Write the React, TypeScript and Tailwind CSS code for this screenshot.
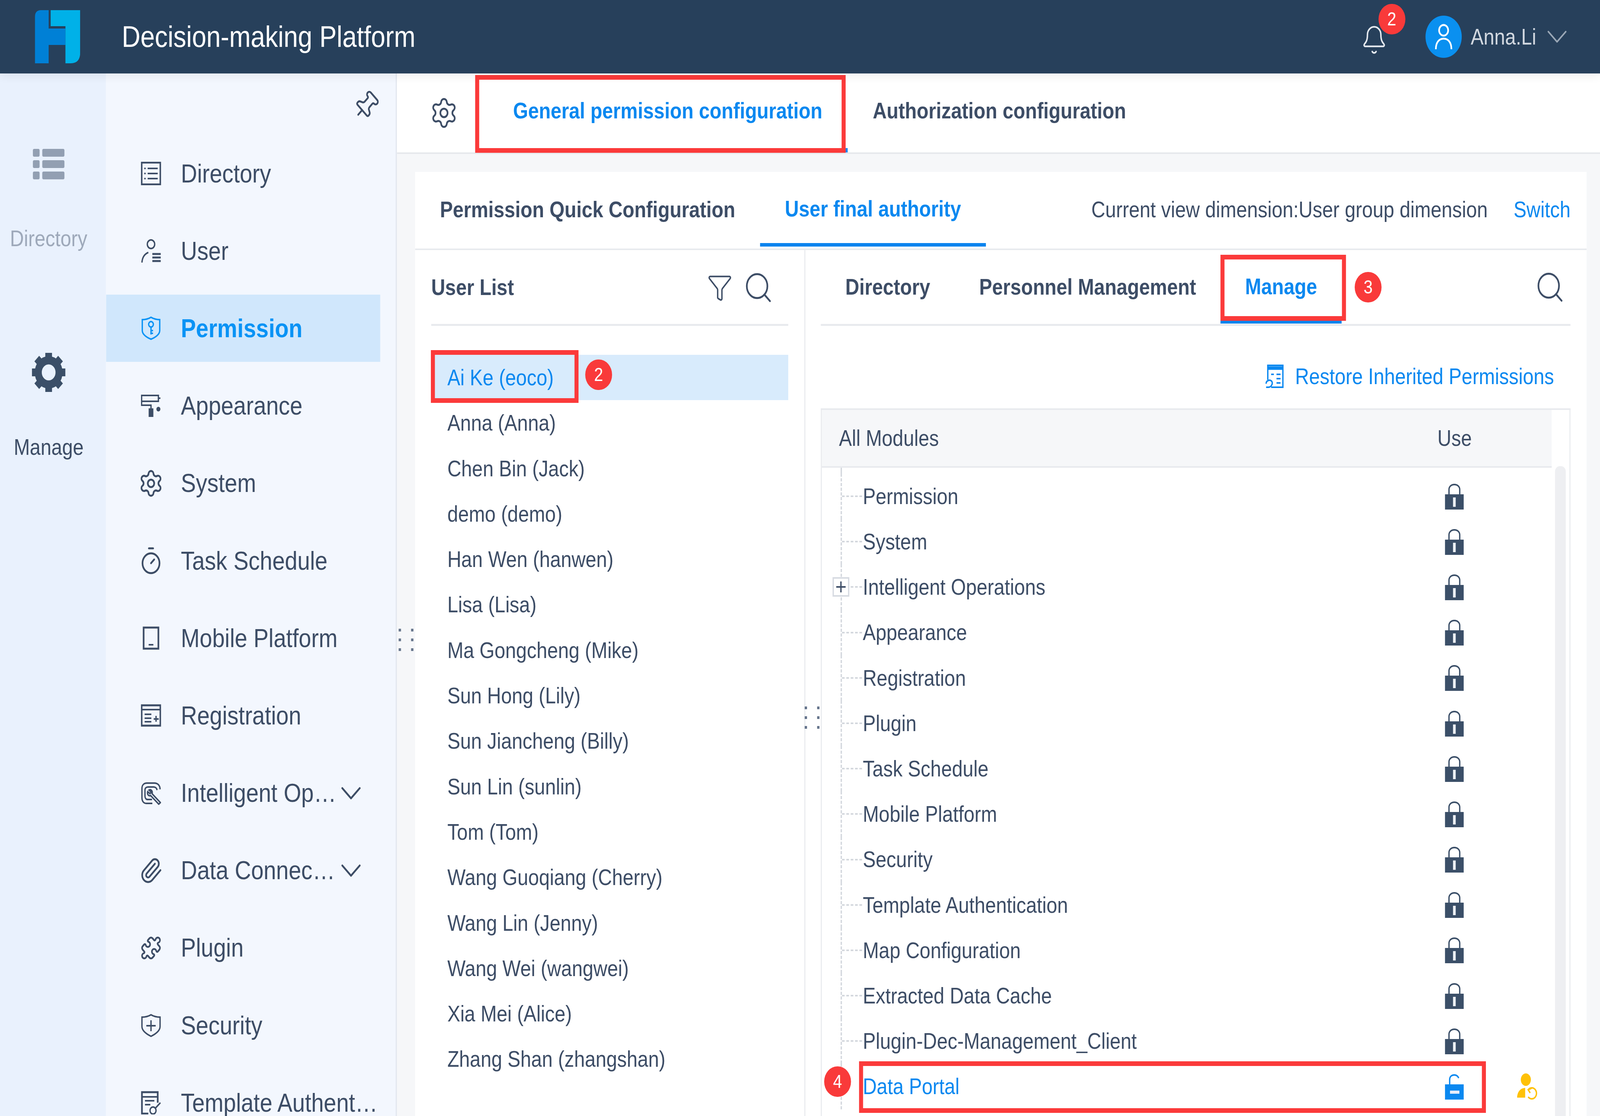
import { Bell, ChevronDown, Funnel, Paperclip, Pin, Puzzle, Search, Settings, Timer } from "lucide-react";
import type { ReactNode } from "react";

function Logo() {
  return (
    <svg viewBox="0 0 135 136" className="w-[135px] h-[136px]">
      <path d="M18 0H41V47H91V89H41V136H0V18Q0 0 18 0Z" fill="#0080d6" />
      <path d="M47 0H135V108Q135 136 107 136H91V41H47Z" fill="#00b1e8" />
    </svg>
  );
}

function Line({ children }: { children: ReactNode }) {
  return (
    <svg viewBox="0 0 60 60" fill="none" stroke="currentColor" strokeWidth="4" className="w-[60px] h-[60px] shrink-0">
      {children}
    </svg>
  );
}

const DirectoryIcon = () => (
  <Line>
    <rect x="2" y="2" width="56" height="56" strokeWidth="5" />
    <path d="M10 17h4M20 17h30M10 30h4M20 30h30M10 43h4M20 43h30" />
  </Line>
);
const UserIcon = () => (
  <Line>
    <circle cx="30" cy="13" r="11" />
    <path d="M3 60C4 46 11 38 22 34" />
    <path d="M34 38h25M34 47h25M34 56h25" strokeWidth="5" />
  </Line>
);
const KeyShieldIcon = () => (
  <Line>
    <path d="M30 2C38 6 48 8 56 8V36C56 46 42 54 30 58C18 54 4 46 4 36V8C12 8 22 6 30 2Z" />
    <circle cx="30" cy="20" r="7" />
    <path d="M30 27V46M30 36h6M30 43h6" />
  </Line>
);
const RollerIcon = () => (
  <Line>
    <rect x="2" y="3" width="50" height="15" />
    <path d="M52 10h6M2 18v10H30v8" />
    <rect x="23" y="36" width="14" height="22" fill="currentColor" stroke="none" />
    <circle cx="52" cy="38" r="6" fill="currentColor" stroke="none" />
  </Line>
);
const MobileIcon = () => (
  <Line>
    <rect x="8" y="3" width="44" height="54" strokeWidth="5" />
    <path d="M23 47h14" />
  </Line>
);
const RegistrationIcon = () => (
  <Line>
    <rect x="2" y="4" width="56" height="52" strokeWidth="5" />
    <path d="M2 15h56M11 27h20M11 37h20M11 46h20M38 39h15M45 31v15" />
  </Line>
);
const IntelligentIcon = () => (
  <Line>
    <path d="M34 56H16C8 56 3 50 3 42V18C3 9 9 4 18 4H40C50 4 57 10 57 20" />
    <path d="M33 46H20C15 46 12 42 12 37V22C12 17 16 14 21 14H38C43 14 47 17 48 22" />
    <path d="M24 22C29 19 36 24 33 31L58 54L53 58L29 36C23 38 18 33 20 26L27 31L31 27Z" />
  </Line>
);
const SecurityIcon = () => (
  <Line>
    <path d="M30 3C38 7 48 9 57 9V33C57 44 44 52 30 58C16 52 3 44 3 33V9C12 9 22 7 30 3Z" />
    <path d="M30 17V45M16 31H44" />
  </Line>
);
const TemplateIcon = () => (
  <Line>
    <path d="M50 30V3H3V58H22" strokeWidth="5" />
    <path d="M3 15H50M12 25H40M12 35H28" />
    <circle cx="36" cy="50" r="9" />
    <path d="M43 44L58 30" />
  </Line>
);

const SideItems: { label: string; icon: ReactNode; more?: boolean; active?: boolean }[] = [
  { label: "Directory", icon: <DirectoryIcon /> },
  { label: "User", icon: <UserIcon /> },
  { label: "Permission", icon: <KeyShieldIcon />, active: true },
  { label: "Appearance", icon: <RollerIcon /> },
  { label: "System", icon: <Settings className="w-[76px] h-[76px] shrink-0" strokeWidth={1.6} /> },
  { label: "Task Schedule", icon: <Timer className="w-[76px] h-[76px] shrink-0" strokeWidth={1.6} /> },
  { label: "Mobile Platform", icon: <MobileIcon /> },
  { label: "Registration", icon: <RegistrationIcon /> },
  { label: "Intelligent Operations", icon: <IntelligentIcon />, more: true },
  { label: "Data Connection", icon: <Paperclip className="w-[70px] h-[70px] shrink-0" strokeWidth={1.7} />, more: true },
  { label: "Plugin", icon: <Puzzle className="w-[64px] h-[64px] shrink-0" strokeWidth={1.8} /> },
  { label: "Security", icon: <SecurityIcon /> },
  { label: "Template Authentication", icon: <TemplateIcon /> },
];

const users = [
  "Ai Ke (eoco)",
  "Anna (Anna)",
  "Chen Bin (Jack)",
  "demo (demo)",
  "Han Wen (hanwen)",
  "Lisa (Lisa)",
  "Ma Gongcheng (Mike)",
  "Sun Hong (Lily)",
  "Sun Jiancheng (Billy)",
  "Sun Lin (sunlin)",
  "Tom (Tom)",
  "Wang Guoqiang (Cherry)",
  "Wang Lin (Jenny)",
  "Wang Wei (wangwei)",
  "Xia Mei (Alice)",
  "Zhang Shan (zhangshan)",
];

const modules = [
  "Permission",
  "System",
  "Intelligent Operations",
  "Appearance",
  "Registration",
  "Plugin",
  "Task Schedule",
  "Mobile Platform",
  "Security",
  "Template Authentication",
  "Map Configuration",
  "Extracted Data Cache",
  "Plugin-Dec-Management_Client",
];

function Lock({ open }: { open?: boolean }) {
  if (open) {
    return (
      <svg viewBox="0 0 56 67" className="w-[56px] h-[67px] text-[#0a88f0]">
        <path d="M14 30V16C14 8 20 4 28 4C34 4 38 6 41 12" fill="none" stroke="currentColor" strokeWidth="4" />
        <rect y="28" width="56" height="39" fill="currentColor" />
        <rect x="15" y="44" width="28" height="8" fill="#e4edfb" />
      </svg>
    );
  }
  return (
    <svg viewBox="0 0 56 67" className="w-[56px] h-[67px] text-[#3b4f68]">
      <path d="M12 30V16C12 8 19 3 28 3C37 3 44 8 44 16V30" fill="none" stroke="currentColor" strokeWidth="4" />
      <rect y="28" width="56" height="39" fill="currentColor" />
      <rect x="24" y="36" width="8" height="24" fill="#eef2f7" />
    </svg>
  );
}

function Dots({ className }: { className: string }) {
  return (
    <div className={"grid grid-cols-2 gap-x-[30px] gap-y-[18px] " + className}>
      {[0, 1, 2, 3, 4, 5].map((i) => (
        <span key={i} className="w-[7px] h-[7px] bg-[#66758c]" />
      ))}
    </div>
  );
}

function Badge({ n, className }: { n: number; className: string }) {
  return (
    <div className={"absolute w-[80px] h-[78px] rounded-full bg-[#f93a3a] text-white text-[48px] flex items-center justify-center " + className}>
      {n}
    </div>
  );
}

function RedBox({ className }: { className: string }) {
  return <div className={"absolute border-[12px] border-[#fb3a3a] " + className} />;
}

export default function App() {
  // the layout is 4768 wide; squeeze it if the window turns out narrower
  const fit = Math.min(1, window.innerWidth / 4768);

  return (
    <div className="w-full h-[2856px] overflow-hidden">
      <div
        className="relative w-[4768px] h-[2856px] overflow-hidden origin-top-left flex flex-col bg-white text-[#3d4d66] font-['Liberation_Sans',Arial,sans-serif] text-[57.6px]"
        style={{ transform: `scaleX(${fit})` }}
      >
        <header className="relative z-10 h-[188px] shrink-0 flex items-center bg-[#27405b] shadow-[0_8px_24px_rgba(0,0,0,0.06)]">
          <div className="ml-[104px]">
            <Logo />
          </div>
          <div className="ml-[124px] text-[76.8px] text-white">Decision-making Platform</div>
          <div className="ml-auto flex items-center pr-[76px]">
            <div className="relative text-[#e6eaf0]">
              <Bell className="w-[80px] h-[80px] mt-[16px]" strokeWidth={1.3} />
              <Badge n={2} className="left-[53px] top-[-36px]" />
            </div>
            <div className="ml-[113px] w-[108px] h-[108px] rounded-full bg-[#0a90f0] flex items-center justify-center">
              <svg viewBox="0 0 60 70" fill="none" stroke="white" strokeWidth="5" className="w-[58px] h-[68px]">
                <circle cx="30" cy="18" r="14" />
                <path d="M6 68C6 50 16 40 30 40C44 40 54 50 54 68" />
              </svg>
            </div>
            <span className="ml-[27px] text-[#d2d8e0]">Anna.Li</span>
            <ChevronDown className="ml-[10px] w-[104px] h-[104px] text-[#9aa7b6]" strokeWidth={1} />
          </div>
        </header>

        <div className="flex-1 flex min-h-0">
          <aside className="w-[316px] shrink-0 bg-[#e9f1fd] flex flex-col items-center pr-[26px]">
            <div className="mt-[193px] w-[94px] h-[78px] grid grid-cols-[20px_1fr] grid-rows-3 gap-x-[8px] gap-y-[9px]">
              {[0, 1, 2, 3, 4, 5].map((i) => (
                <span key={i} className="rounded-[4px] bg-[#929fb2]" />
              ))}
            </div>
            <div className="mt-[116px] leading-[70px] text-[#9ea9ba]">Directory</div>
            <svg viewBox="0 0 100 100" className="mt-[258px] w-[100px] h-[100px] text-[#3b4f68]">
              {[0, 45, 90, 135, 180, 225, 270, 315].map((r) => (
                <rect key={r} x="40" y="0" width="20" height="22" fill="currentColor" transform={`rotate(${r} 50 50)`} />
              ))}
              <circle cx="50" cy="50" r="31" fill="none" stroke="currentColor" strokeWidth="21" />
            </svg>
            <div className="mt-[106px] leading-[70px]">Manage</div>
          </aside>

          <nav className="w-[867px] shrink-0 bg-[#f3f7fe] border-r-[4px] border-[#e3e8f0] overflow-hidden">
            <div className="h-[170px] flex justify-end pr-[48px] pt-[42px]">
              <Pin className="w-[80px] h-[80px] rotate-45" strokeWidth={1.5} />
            </div>
            <div className="flex flex-col gap-[26.2px] mr-[46px]">
              {SideItems.map((item) => (
                <div
                  key={item.label}
                  className={
                    "h-[172px] shrink-0 flex items-center pl-[104px] text-[67.2px] " +
                    (item.active ? "bg-[#d0e7fc] text-[#0a93f5] font-bold" : "")
                  }
                >
                  <div className="w-[60px] flex justify-center shrink-0">{item.icon}</div>
                  <span className={"ml-[59px] truncate " + (item.more ? "w-[470px]" : "w-[606px]")}>{item.label}</span>
                  {item.more && <ChevronDown className="ml-[-15px] w-[104px] h-[104px] shrink-0" strokeWidth={1.2} />}
                </div>
              ))}
            </div>
          </nav>

          <main className="flex-1 min-w-0 flex flex-col bg-[#f6f7f9]">
            <div className="h-[206px] shrink-0 bg-white border-b-[4px] border-[#e6e8ec] flex items-center pl-[97px] font-bold">
              <Settings className="w-[86px] h-[86px] shrink-0" strokeWidth={1.4} />
              <div className="ml-[88px] h-full flex">
                <div className="h-full px-[75px] flex items-center text-[#0a88f0] border-b-[11px] border-[#0a84ee]">General permission configuration</div>
                <div className="h-full px-[75px] flex items-center pb-[11px]">Authorization configuration</div>
              </div>
            </div>

            <div className="flex-1 min-h-0 flex pt-[46px] pl-[54px] pr-[40px]">
              <div className="flex-1 min-w-0 bg-white flex flex-col">
                <div className="h-[200px] shrink-0 flex border-b-[4px] border-[#e8eaee]">
                  <div className="h-full px-[74px] flex items-center font-bold pb-[4px]">Permission Quick Configuration</div>
                  <div className="h-[191px] px-[74px] flex items-center font-bold pt-[6px] text-[#0a88f0] border-b-[9px] border-[#0a84ee]">User final authority</div>
                  <div className="ml-auto flex items-center pr-[48px] pb-[4px]">
                    <span>Current view dimension:User group dimension</span>
                    <span className="ml-[77px] text-[#0a88f0]">Switch</span>
                  </div>
                </div>

                <div className="flex-1 min-h-0 flex">
                  <section className="w-[1163px] shrink-0 border-r-[3px] border-[#e8eaee] px-[48px]">
                    <div className="h-[194px] flex items-center border-b-[5px] border-[#e8eaee] pt-[2px]">
                      <span className="font-bold">User List</span>
                      <Funnel className="ml-auto w-[76px] h-[76px]" strokeWidth={1.3} />
                      <Search className="ml-[31px] mr-[43px] w-[92px] h-[92px]" strokeWidth={1.3} />
                    </div>
                    <div className="pt-[74px]">
                      {users.map((u, i) => (
                        <div key={u} className={"h-[116.3px] flex items-center pl-[48px] " + (i === 0 ? "bg-[#d8ebfc] text-[#0a88f0]" : "")}>
                          {u}
                        </div>
                      ))}
                    </div>
                  </section>

                  <section className="flex-1 min-w-0 pl-[46px] pr-[48px] flex flex-col">
                    <div className="h-[194px] shrink-0 flex border-b-[5px] border-[#e8eaee] font-bold">
                      <div className="h-full px-[73px] flex items-center">Directory</div>
                      <div className="h-full px-[73px] flex items-center">Personnel Management</div>
                      <div className="h-[188px] px-[73px] pt-[6px] flex items-center text-[#0a88f0] border-b-[7px] border-[#0a84ee]">Manage</div>
                      <Search className="ml-auto mr-[15px] self-center w-[92px] h-[92px]" strokeWidth={1.3} />
                    </div>
                    <div className="h-[211px] shrink-0 flex justify-end pt-[98px] pr-[49px] text-[#0a88f0]">
                      <svg viewBox="0 0 56 62" fill="none" stroke="currentColor" strokeWidth="4" className="w-[56px] h-[62px]">
                        <path d="M8 40V3H53V59H18" />
                        <path d="M8 10H53" strokeWidth="9" />
                        <path d="M18 26H26M34 26H46M34 37H46M34 48H46" />
                        <path d="M3 50C3 42 14 38 20 44C24 50 18 59 10 59H3" />
                      </svg>
                      <span className="ml-[34px] leading-[62px]">Restore Inherited Permissions</span>
                    </div>
                    <div className="flex-1 min-h-0 border-x-[3px] border-t-[4px] border-[#e8eaee] flex flex-col">
                      <div className="h-[148px] shrink-0 w-[2175px] bg-[#f6f7f9] border-b-[4px] border-[#e8eaee] flex items-center justify-between pl-[51px] pr-[238px]">
                        <span>All Modules</span>
                        <span>Use</span>
                      </div>
                      <div className="flex-1 min-h-0 flex">
                        <div className="w-[2175px] shrink-0 pl-[56px]">
                          <div className="h-[15px] border-l-[4px] border-dashed border-[#d3d7dd]" />
                          {modules.map((m) => (
                            <div key={m} className="h-[116.2px] flex items-center border-l-[4px] border-dashed border-[#d3d7dd]">
                              <div className="relative w-[60px] shrink-0 border-t-[4px] border-dashed border-[#d3d7dd] mr-[2px]">
                                {m === "Intelligent Operations" && (
                                  <div className="absolute left-[-28px] top-[-27px] w-[50px] h-[50px] bg-white border-[4px] border-[#d7dbe2] flex items-center justify-center">
                                    <span className="absolute w-[28px] h-[4px] bg-[#3d4d66]" />
                                    <span className="absolute w-[4px] h-[28px] bg-[#3d4d66]" />
                                  </div>
                                )}
                              </div>
                              <span className="flex-1 min-w-0">{m}</span>
                              <div className="mr-[262px]">
                                <Lock />
                              </div>
                            </div>
                          ))}
                          <div className="h-[116.2px] flex items-center border-l-[4px] border-dashed border-[#d3d7dd] text-[#0a88f0]">
                            <div className="w-[62px] shrink-0" />
                            <span className="flex-1 min-w-0">Data Portal</span>
                            <Lock open />
                            <svg viewBox="0 0 64 67" className="ml-[156px] mr-[42px] w-[64px] h-[67px] text-[#ffc107]">
                              <ellipse cx="29" cy="16" rx="15" ry="16" fill="currentColor" />
                              <path d="M3 62C3 50 10 38 27 37V62Z" fill="currentColor" />
                              <path d="M36 42A14 14 0 1 1 36 60M46 38L36 42L42 50" fill="none" stroke="currentColor" strokeWidth="4" />
                            </svg>
                          </div>
                        </div>
                        <div className="ml-[10px] w-[32px] mt-[-4px] rounded-t-[14px] bg-[#eeeff2]" />
                      </div>
                    </div>
                  </section>
                </div>
              </div>
            </div>
          </main>
        </div>

        <Dots className="absolute left-[1188px] top-[1609px]" />
        <Dots className="absolute left-[2398px] top-[1808px]" />

        <RedBox className="left-[1416px] top-[192px] w-[1104px] h-[199px]" />
        <RedBox className="left-[1284px] top-[896px] w-[440px] h-[135px]" />
        <RedBox className="left-[3637px] top-[652px] w-[374px] h-[169px]" />
        <RedBox className="left-[2560px] top-[2716px] w-[1868px] h-[132px]" />

        <Badge n={1} className="left-[1644px] top-[81px]" />
        <Badge n={2} className="left-[1744px] top-[920px]" />
        <Badge n={3} className="left-[4037px] top-[696px]" />
        <Badge n={4} className="left-[2456px] top-[2729px]" />
      </div>
    </div>
  );
}
